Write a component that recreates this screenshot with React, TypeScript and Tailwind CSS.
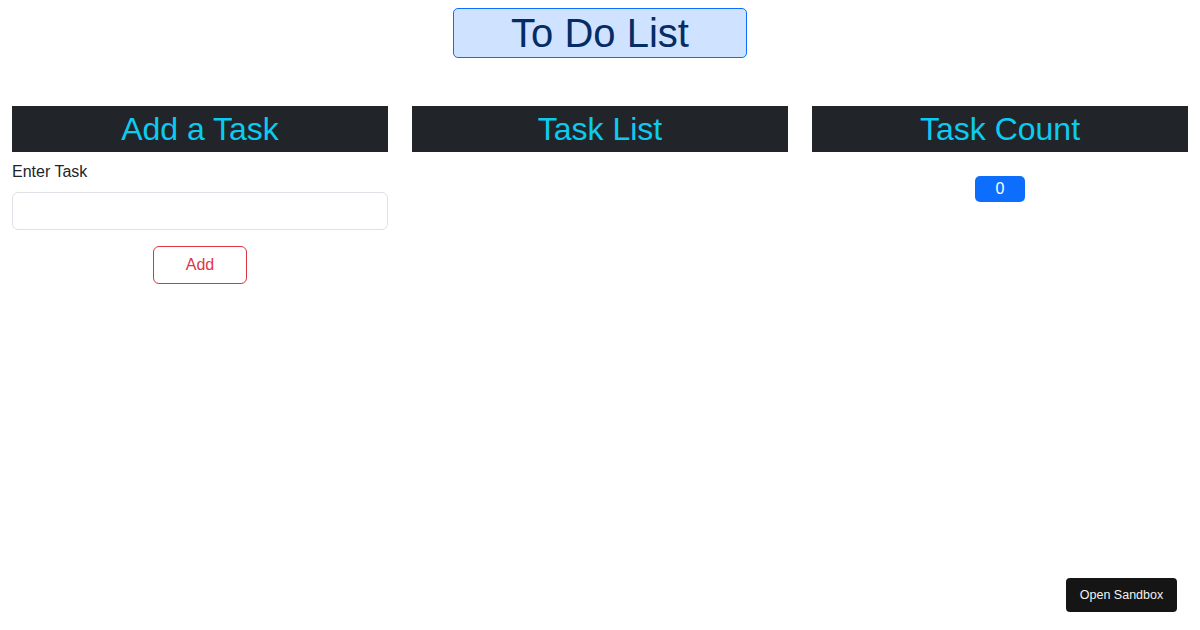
import { useState } from 'react';

export default function App() {
    const [task, setTask] = useState('');
    const [tasks, setTasks] = useState<string[]>([]);

    const addTask = () => {
        if (!task.trim()) return;
        setTasks([...tasks, task.trim()]);
        setTask('');
    };

    return (
        <div className="relative w-[1200px] h-[630px] bg-white text-[#212529] font-['Liberation_Sans',Arial,sans-serif]">
            <div className="flex justify-center pt-[8px]">
                <h1 className="w-[294px] h-[50px] flex items-center justify-center bg-[#cfe2ff] border border-[#0d6efd] rounded-[5px] text-[#052c65] text-[40px] leading-none">
                    To Do List
                </h1>
            </div>

            <div className="grid grid-cols-3 gap-6 px-3 mt-[48px]">
                <div className="flex flex-col">
                    <h2 className="h-[46px] flex items-center justify-center bg-[#212529] text-[#0dcaf0] text-[32px] leading-none">
                        Add a Task
                    </h2>
                    <label className="mt-[8px] text-[16px] leading-6">Enter Task</label>
                    <input
                        value={task}
                        onChange={(e) => setTask(e.target.value)}
                        className="mt-[8px] h-[38px] px-3 border border-[#dee2e6] rounded-[6px] outline-none"
                    />
                    <div className="flex justify-center mt-[16px]">
                        <button
                            onClick={addTask}
                            className="w-[94px] h-[38px] border border-[#dc3545] rounded-[6px] text-[#dc3545] text-[16px]"
                        >
                            Add
                        </button>
                    </div>
                </div>

                <div className="flex flex-col">
                    <h2 className="h-[46px] flex items-center justify-center bg-[#212529] text-[#0dcaf0] text-[32px] leading-none">
                        Task List
                    </h2>
                    <ul className="mt-2">
                        {tasks.map((t, i) => (
                            <li key={i} className="py-1">{t}</li>
                        ))}
                    </ul>
                </div>

                <div className="flex flex-col">
                    <h2 className="h-[46px] flex items-center justify-center bg-[#212529] text-[#0dcaf0] text-[32px] leading-none">
                        Task Count
                    </h2>
                    <div className="flex justify-center mt-[24px]">
                        <span className="w-[50px] h-[26px] flex items-center justify-center bg-[#0d6efd] text-white rounded-[5px] text-[16px]">
                            {tasks.length}
                        </span>
                    </div>
                </div>
            </div>

            <button className="absolute right-[23px] bottom-[18px] w-[111px] h-[34px] bg-[#151515] text-[#f2f2f2] text-[12.5px] rounded-[4px] font-['Liberation_Sans',Arial,sans-serif]">
                Open Sandbox
            </button>
        </div>
    );
}
